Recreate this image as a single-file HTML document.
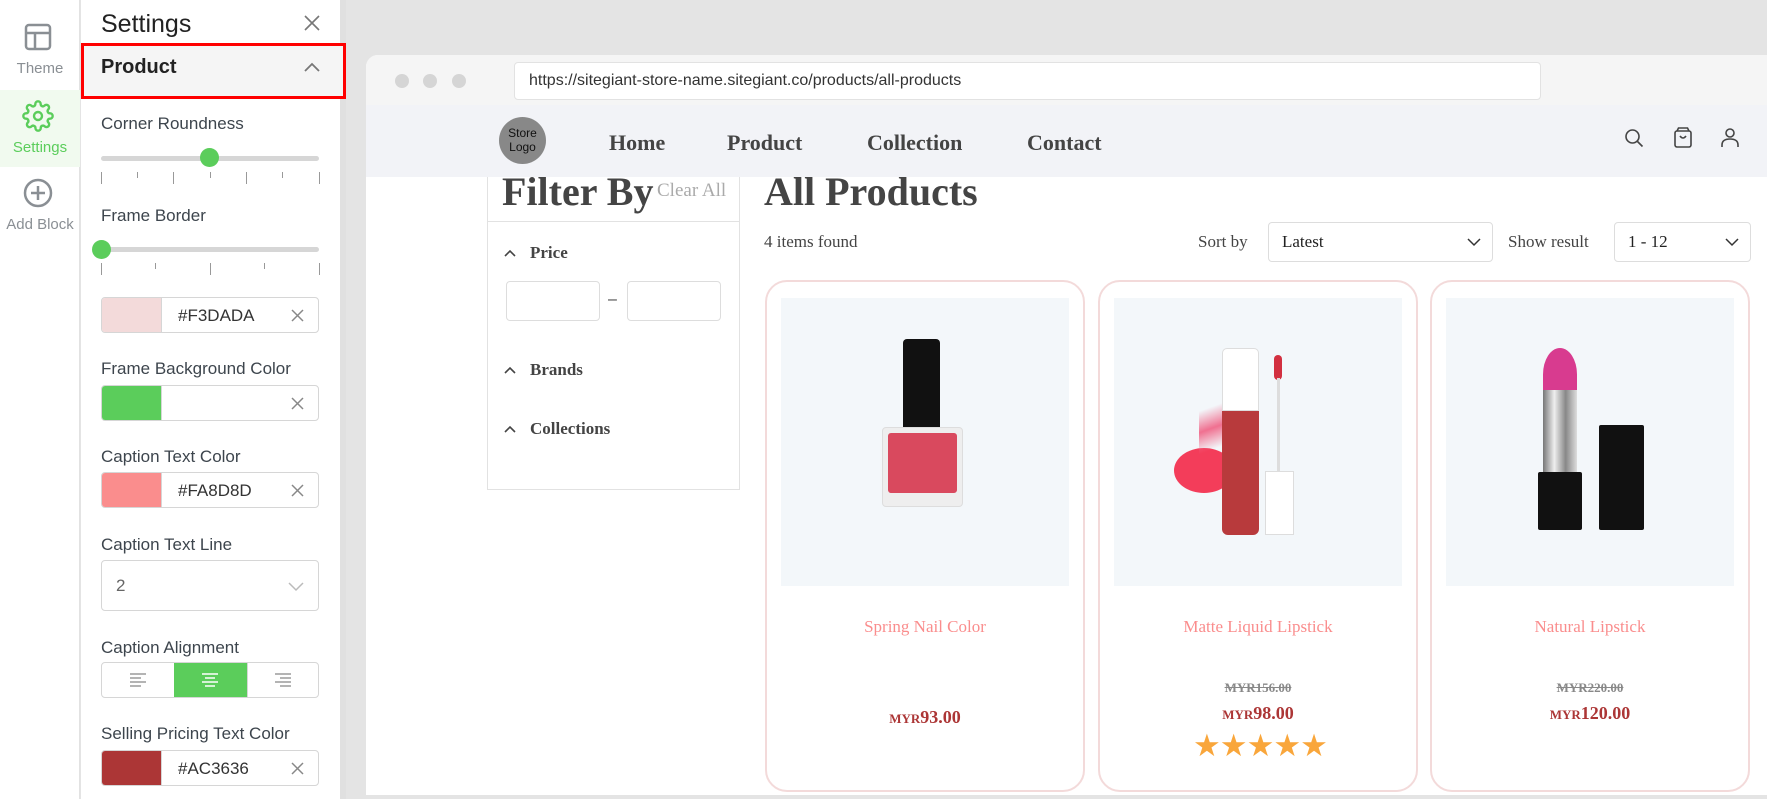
<!DOCTYPE html>
<html><head><meta charset="utf-8"><style>
*{box-sizing:border-box;margin:0;padding:0}
body{width:1767px;height:799px;overflow:hidden;background:#e4e4e4;font-family:"Liberation Sans",sans-serif;position:relative}
.a{position:absolute}
.lbl{position:absolute;left:101px;font-size:17px;color:#3d454d}
.inp{position:absolute;left:101px;width:218px;height:36px;border:1px solid #d6d6d6;border-radius:4px;background:#fff;overflow:hidden}
.inp .sw{position:absolute;left:0;top:0;bottom:0;width:60px;border-right:1px solid #d6d6d6}
.inp .t{position:absolute;left:76px;top:8px;font-size:17px;color:#333}
.inp .x{position:absolute;right:14px;top:11px}
.serif{font-family:"Liberation Serif",serif}
.card{position:absolute;top:280px;width:320px;height:512px;border:2px solid #f3dada;border-radius:22px;background:#fff}
.img{position:absolute;left:14px;top:16px;width:288px;height:288px;background:#f3f7fa}
.nm{position:absolute;left:0;right:0;top:335px;text-align:center;color:#fa8d8d;font-size:17px;font-family:"Liberation Serif",serif}
.old{position:absolute;left:0;right:0;text-align:center;color:#888;font-size:13px;font-weight:bold;text-decoration:line-through;font-family:"Liberation Serif",serif}
.pr{position:absolute;left:0;right:0;text-align:center;color:#ac3636;font-size:18px;font-weight:bold;font-family:"Liberation Serif",serif}
.pr small{font-size:13px}
.nav{position:absolute;top:130px;font-family:"Liberation Serif",serif;font-weight:bold;font-size:22px;color:#444}
.tick{position:absolute;width:1px;background:#999}
</style></head><body>
<div class="a" style="left:0;top:0;width:80px;height:799px;background:#fff;border-right:1px solid #e2e2e2"></div>
<svg class="a" style="left:24px;top:23px" width="28" height="28" viewBox="0 0 28 28"><rect x="2" y="2" width="24" height="24" rx="3" fill="none" stroke="#8a8f94" stroke-width="2.5"/><line x1="2" y1="10" x2="26" y2="10" stroke="#8a8f94" stroke-width="2.5"/><line x1="11" y1="10" x2="11" y2="26" stroke="#8a8f94" stroke-width="2.5"/></svg>
<div class="a" style="left:0;width:80px;top:60px;text-align:center;font-size:15px;color:#8a8f94">Theme</div>
<div class="a" style="left:0;top:90px;width:80px;height:77px;background:#f1faef"></div>
<svg class="a" style="left:22px;top:100px" width="32" height="32" viewBox="0 0 24 24" fill="none" stroke="#5bcd5b" stroke-width="1.8"><circle cx="12" cy="12" r="3"/><path d="M19.4 15a1.65 1.65 0 0 0 .33 1.82l.06.06a2 2 0 1 1-2.83 2.83l-.06-.06a1.65 1.65 0 0 0-1.82-.33 1.65 1.65 0 0 0-1 1.51V21a2 2 0 1 1-4 0v-.09A1.65 1.65 0 0 0 9 19.4a1.65 1.65 0 0 0-1.82.33l-.06.06a2 2 0 1 1-2.83-2.83l.06-.06A1.65 1.65 0 0 0 4.6 15a1.65 1.65 0 0 0-1.51-1H3a2 2 0 1 1 0-4h.09A1.65 1.65 0 0 0 4.6 9a1.65 1.65 0 0 0-.33-1.82l-.06-.06a2 2 0 1 1 2.83-2.83l.06.06A1.65 1.65 0 0 0 9 4.6a1.65 1.65 0 0 0 1-1.51V3a2 2 0 1 1 4 0v.09a1.65 1.65 0 0 0 1 1.51 1.65 1.65 0 0 0 1.82-.33l.06-.06a2 2 0 1 1 2.83 2.83l-.06.06A1.65 1.65 0 0 0 19.4 9a1.65 1.65 0 0 0 1.51 1H21a2 2 0 1 1 0 4h-.09a1.65 1.65 0 0 0-1.51 1z"/></svg>
<div class="a" style="left:0;width:80px;top:139px;text-align:center;font-size:15px;color:#5bcd5b">Settings</div>
<svg class="a" style="left:23px;top:178px" width="30" height="30" viewBox="0 0 30 30" fill="none" stroke="#8a8f94" stroke-width="2.5"><circle cx="15" cy="15" r="13"/><path d="M15 8v14M8 15h14"/></svg>
<div class="a" style="left:0;width:80px;top:216px;text-align:center;font-size:15px;color:#8a8f94">Add Block</div>
<div class="a" style="left:81px;top:0;width:259px;height:799px;background:#fff"></div>
<div class="a" style="left:340px;top:0;width:6px;height:799px;background:#e0e0e0"></div>
<div class="a" style="left:101px;top:10px;font-size:25px;color:#222">Settings</div>
<svg class="a" style="left:304px;top:15px" width="16" height="16"><path d="M1 1l14 14M15 1L1 15" stroke="#777" stroke-width="1.6"/></svg>
<div class="a" style="left:81px;top:43px;width:265px;height:56px;border:3px solid #f00;background:#f5f5f5"></div>
<div class="a" style="left:101px;top:56px;font-size:20px;font-weight:bold;color:#222">Product</div>
<svg class="a" style="left:303px;top:61px" width="18" height="12" viewBox="0 0 18 12"><path d="M2 10l7-7 7 7" fill="none" stroke="#777" stroke-width="1.8"/></svg>
<div class="lbl" style="top:114px">Corner Roundness</div>
<div class="a" style="left:101px;top:156px;width:218px;height:5px;background:#d6d6d6;border-radius:3px"></div>
<div class="a" style="left:200px;top:148px;width:19px;height:19px;border-radius:50%;background:#5bcd5b"></div>
<div class="tick" style="left:101px;top:172px;height:12px"></div><div class="tick" style="left:137px;top:172px;height:6px"></div><div class="tick" style="left:173px;top:172px;height:12px"></div><div class="tick" style="left:210px;top:172px;height:6px"></div><div class="tick" style="left:246px;top:172px;height:12px"></div><div class="tick" style="left:282px;top:172px;height:6px"></div><div class="tick" style="left:319px;top:172px;height:12px"></div>
<div class="lbl" style="top:206px">Frame Border</div>
<div class="a" style="left:101px;top:247px;width:218px;height:5px;background:#d6d6d6;border-radius:3px"></div>
<div class="a" style="left:92px;top:240px;width:19px;height:19px;border-radius:50%;background:#5bcd5b"></div>
<div class="tick" style="left:101px;top:263px;height:12px"></div><div class="tick" style="left:155px;top:263px;height:6px"></div><div class="tick" style="left:210px;top:263px;height:12px"></div><div class="tick" style="left:264px;top:263px;height:6px"></div><div class="tick" style="left:319px;top:263px;height:12px"></div>
<div class="inp" style="top:297px"><div class="sw" style="background:#f3dada"></div><div class="t">#F3DADA</div><svg class="x" width="13" height="13"><path d="M1 1l11 11M12 1L1 12" stroke="#888" stroke-width="1.5"/></svg></div>
<div class="lbl" style="top:359px">Frame Background Color</div>
<div class="inp" style="top:385px"><div class="sw" style="background:#5bcd5b"></div><svg class="x" width="13" height="13"><path d="M1 1l11 11M12 1L1 12" stroke="#888" stroke-width="1.5"/></svg></div>
<div class="lbl" style="top:447px">Caption Text Color</div>
<div class="inp" style="top:472px"><div class="sw" style="background:#fa8d8d"></div><div class="t">#FA8D8D</div><svg class="x" width="13" height="13"><path d="M1 1l11 11M12 1L1 12" stroke="#888" stroke-width="1.5"/></svg></div>
<div class="lbl" style="top:535px">Caption Text Line</div>
<div class="inp" style="top:560px;height:51px"><div class="t" style="left:14px;top:15px;color:#666">2</div><svg class="a" style="right:14px;top:21px" width="16" height="10"><path d="M1 1l7 7 7-7" fill="none" stroke="#bbb" stroke-width="1.5"/></svg></div>
<div class="lbl" style="top:638px">Caption Alignment</div>
<div class="inp" style="top:662px"><div class="a" style="left:72px;top:0;width:74px;height:36px;background:#5bcd5b"></div><div class="a" style="left:145px;top:0;width:1px;height:36px;background:#d6d6d6"></div>
<svg class="a" style="left:28px;top:10px" width="18" height="16" stroke="#888" stroke-width="1.3"><path d="M0 1h16M0 5h11M0 9h16M0 13h11"/></svg>
<svg class="a" style="left:100px;top:10px" width="18" height="16" stroke="#fff" stroke-width="1.5"><path d="M0 1h16M3 5h10M0 9h16M3 13h10"/></svg>
<svg class="a" style="left:173px;top:10px" width="18" height="16" stroke="#888" stroke-width="1.3"><path d="M0 1h16M5 5h11M0 9h16M5 13h11"/></svg></div>
<div class="lbl" style="top:724px">Selling Pricing Text Color</div>
<div class="inp" style="top:750px"><div class="sw" style="background:#ac3636"></div><div class="t">#AC3636</div><svg class="x" width="13" height="13"><path d="M1 1l11 11M12 1L1 12" stroke="#888" stroke-width="1.5"/></svg></div>
<div class="a" style="left:366px;top:55px;width:1401px;height:740px;background:#fff;border-radius:12px 0 0 0;overflow:hidden">
 <div class="a" style="left:0;top:0;right:0;height:50px;background:#f5f5f5"></div>
</div>
<div class="a" style="left:395px;top:74px;width:14px;height:14px;border-radius:50%;background:#d5d5d5"></div>
<div class="a" style="left:423px;top:74px;width:14px;height:14px;border-radius:50%;background:#d5d5d5"></div>
<div class="a" style="left:452px;top:74px;width:14px;height:14px;border-radius:50%;background:#d5d5d5"></div>
<div class="a" style="left:514px;top:62px;width:1027px;height:38px;background:#fff;border:1px solid #e2e2e2;border-radius:4px"></div>
<div class="a" style="left:529px;top:72px;font-size:16px;color:#333">https://sitegiant-store-name.sitegiant.co/products/all-products</div>
<div class="a" style="left:366px;top:105px;width:1401px;height:72px;background:#f2f3f7"></div>
<div class="a" style="left:499px;top:117px;width:47px;height:47px;border-radius:50%;background:#888;text-align:center;font-size:12px;line-height:14px;padding-top:9px;color:#111">Store<br>Logo</div>
<div class="nav" style="left:609px">Home</div>
<div class="nav" style="left:727px">Product</div>
<div class="nav" style="left:867px">Collection</div>
<div class="nav" style="left:1027px">Contact</div>
<svg class="a" style="left:1624px;top:128px" width="20" height="20" fill="none" stroke="#444" stroke-width="1.6"><circle cx="8.5" cy="8.5" r="6.5"/><path d="M13.5 13.5l5 5"/></svg>
<svg class="a" style="left:1673px;top:127px" width="20" height="22" fill="none" stroke="#444" stroke-width="1.6"><rect x="2" y="4" width="16" height="16" rx="2"/><path d="M4 4l1.5-3h9L16 4M7 9q3 4 6 0"/></svg>
<svg class="a" style="left:1720px;top:127px" width="20" height="22" fill="none" stroke="#444" stroke-width="1.6"><circle cx="10" cy="6" r="4"/><path d="M2 20v-2q0-6 8-6t8 6v2"/></svg>
<div class="a" style="left:487px;top:177px;width:253px;height:313px;border:1px solid #e2e2e2;border-top:none"></div>
<div class="a serif" style="left:502px;top:168px;font-size:40px;font-weight:bold;color:#444">Filter By</div>
<div class="a serif" style="left:657px;top:180px;font-size:19px;color:#aaa">Clear All</div>
<div class="a" style="left:487px;top:221px;width:253px;height:1px;background:#e2e2e2"></div>
<svg class="a" style="left:504px;top:249px" width="12" height="8"><path d="M1 7l5-5 5 5" fill="none" stroke="#444" stroke-width="1.6"/></svg>
<div class="a serif" style="left:530px;top:243px;font-size:17px;font-weight:bold;color:#444">Price</div>
<div class="a" style="left:506px;top:281px;width:94px;height:40px;border:1px solid #ddd;border-radius:4px"></div>
<div class="a" style="left:608px;top:291px;font-size:16px;color:#444">–</div>
<div class="a" style="left:627px;top:281px;width:94px;height:40px;border:1px solid #ddd;border-radius:4px"></div>
<svg class="a" style="left:504px;top:366px" width="12" height="8"><path d="M1 7l5-5 5 5" fill="none" stroke="#444" stroke-width="1.6"/></svg>
<div class="a serif" style="left:530px;top:360px;font-size:17px;font-weight:bold;color:#444">Brands</div>
<svg class="a" style="left:504px;top:425px" width="12" height="8"><path d="M1 7l5-5 5 5" fill="none" stroke="#444" stroke-width="1.6"/></svg>
<div class="a serif" style="left:530px;top:419px;font-size:17px;font-weight:bold;color:#444">Collections</div>
<div class="a serif" style="left:764px;top:168px;font-size:40px;font-weight:bold;color:#444">All Products</div>
<div class="a serif" style="left:764px;top:232px;font-size:17px;color:#444">4 items found</div>
<div class="a serif" style="left:1198px;top:232px;font-size:17px;color:#444">Sort by</div>
<div class="a" style="left:1268px;top:222px;width:225px;height:40px;border:1px solid #ddd;border-radius:4px"></div>
<div class="a serif" style="left:1282px;top:232px;font-size:17px;color:#222">Latest</div>
<svg class="a" style="left:1467px;top:238px" width="14" height="9"><path d="M1 1l6 6 6-6" fill="none" stroke="#333" stroke-width="1.5"/></svg>
<div class="a serif" style="left:1508px;top:232px;font-size:17px;color:#444">Show result</div>
<div class="a" style="left:1614px;top:222px;width:137px;height:40px;border:1px solid #ddd;border-radius:4px"></div>
<div class="a serif" style="left:1628px;top:232px;font-size:17px;color:#222">1 - 12</div>
<svg class="a" style="left:1725px;top:238px" width="14" height="9"><path d="M1 1l6 6 6-6" fill="none" stroke="#333" stroke-width="1.5"/></svg>
<div class="card" style="left:765px"><div class="img">
 <div class="a" style="left:122px;top:41px;width:37px;height:90px;background:#111;border-radius:4px 4px 0 0"></div>
 <div class="a" style="left:101px;top:129px;width:81px;height:80px;background:#eee;border-radius:4px;border:1px solid #ddd"></div>
 <div class="a" style="left:107px;top:135px;width:69px;height:60px;background:#d9495e;border-radius:3px"></div>
</div><div class="nm">Spring Nail Color</div><div class="pr" style="top:425px"><small>MYR</small>93.00</div></div>
<div class="card" style="left:1098px"><div class="img">
 <div class="a" style="left:60px;top:150px;width:60px;height:45px;background:#f33d5a;border-radius:50%"></div>
 <div class="a" style="left:85px;top:70px;width:50px;height:90px;background:linear-gradient(160deg,transparent 40%,#f07090 60%,transparent 80%)"></div>
 <div class="a" style="left:108px;top:50px;width:37px;height:63px;background:#fff;border:1px solid #ddd;border-radius:5px 5px 0 0"></div>
 <div class="a" style="left:108px;top:113px;width:37px;height:124px;background:#b83a3c;border-radius:0 0 6px 6px"></div>
 <div class="a" style="left:160px;top:57px;width:8px;height:25px;background:#d23040;border-radius:4px"></div>
 <div class="a" style="left:163px;top:80px;width:3px;height:95px;background:#ddd"></div>
 <div class="a" style="left:151px;top:173px;width:29px;height:64px;background:#fff;border:1px solid #ddd"></div>
</div><div class="nm">Matte Liquid Lipstick</div><div class="old" style="top:398px">MYR156.00</div><div class="pr" style="top:421px"><small>MYR</small>98.00</div>
<div class="a" style="left:93px;top:446px;font-size:31px;color:#f9a63b;letter-spacing:-1px">★★★★★</div></div>
<div class="card" style="left:1430px"><div class="img">
 <div class="a" style="left:97px;top:50px;width:34px;height:44px;background:#d83b8f;border-radius:50% 50% 0 0 / 60% 60% 0 0"></div>
 <div class="a" style="left:97px;top:92px;width:34px;height:82px;background:linear-gradient(90deg,#777,#eee,#888,#ddd)"></div>
 <div class="a" style="left:92px;top:174px;width:44px;height:58px;background:#111;border-radius:2px"></div>
 <div class="a" style="left:153px;top:127px;width:45px;height:105px;background:#111;border-radius:2px"></div>
</div><div class="nm">Natural Lipstick</div><div class="old" style="top:398px">MYR220.00</div><div class="pr" style="top:421px"><small>MYR</small>120.00</div></div>
</body></html>
